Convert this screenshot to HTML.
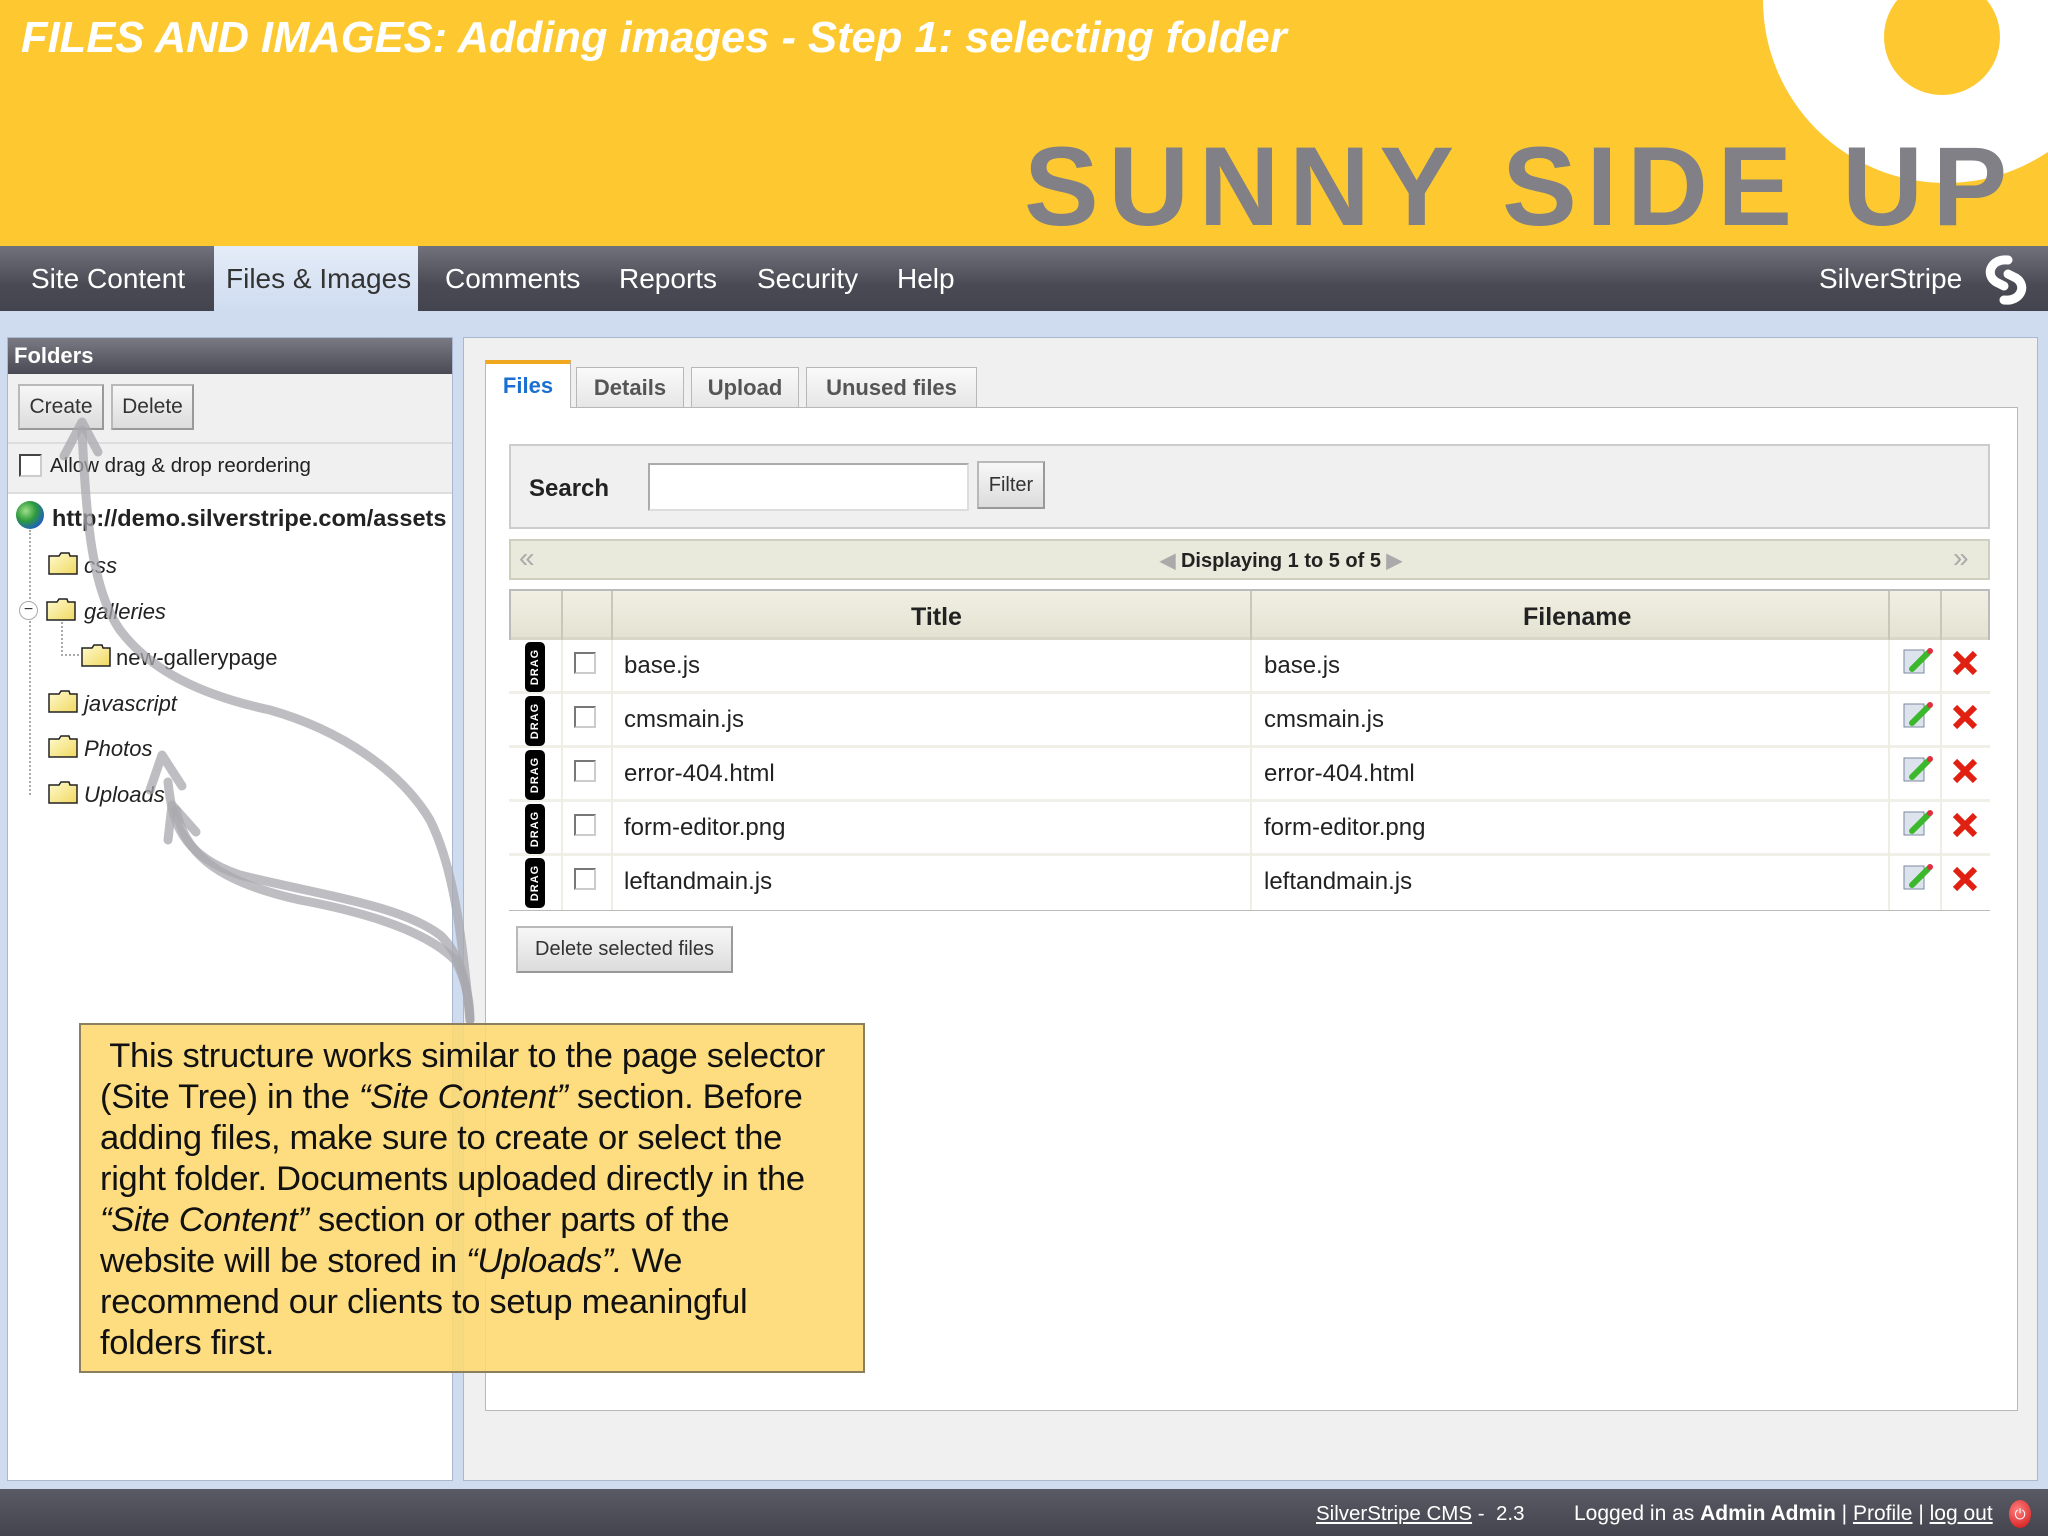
<!DOCTYPE html>
<html><head><meta charset="utf-8">
<style>
*{margin:0;padding:0;box-sizing:border-box}
body{width:2048px;height:1536px;position:relative;overflow:hidden;font-family:"Liberation Sans",Arial,sans-serif;background:#cfdcf0}
.a{position:absolute}
#hdr{left:0;top:0;width:2048px;height:246px;background:#fdc830;overflow:hidden}
#nav{left:0;top:246px;width:2048px;height:65px;background:linear-gradient(#72727c,#4a4a54 60%,#44444e)}
.ni{position:absolute;top:0;height:65px;line-height:65px;color:#fff;font-size:28px}
.btn{position:absolute;background:linear-gradient(#f7f7f7,#dcdcdc);border:2px solid #b9b9b9;border-right-color:#999;border-bottom-color:#999;font-size:21px;color:#333;text-align:center}
.tab{position:absolute;top:367px;height:40px;background:linear-gradient(#fafafa,#e6e6e6);border:1px solid #b8b8b8;border-bottom:none;font-size:22px;font-weight:bold;color:#555;text-align:center;line-height:40px}
.fold{position:absolute;width:30px;height:23px}
.ti{position:absolute;font-size:22px;font-style:italic;color:#222}
.row{position:absolute;left:509px;width:1481px;height:54px;background:#fff;border-bottom:3px solid #f1f0e8}
.drag{position:absolute;left:16px;top:2px;width:20px;height:50px;background:#000;border-radius:5px;color:#fff;font-size:11px;font-weight:bold}
.drag span{position:absolute;left:50%;top:50%;transform:translate(-50%,-50%) rotate(-90deg);letter-spacing:1px}
.cb{position:absolute;left:65px;top:12px;width:22px;height:22px;border:2px solid #777;border-right-color:#ccc;border-bottom-color:#ccc;background:#fff}
.cell{position:absolute;top:12px;font-size:24px;color:#222}
.vl{position:absolute;top:0;width:2px;height:54px;background:#efeee4}
</style></head><body>
<div id="hdr" class="a">
 <div class="a" style="left:1763px;top:-183px;width:366px;height:366px;border-radius:50%;background:#fff"></div>
 <div class="a" style="left:1884px;top:-21px;width:116px;height:116px;border-radius:50%;background:#fdc830"></div>
 <div class="a" style="left:21px;top:14px;font-size:43.5px;font-style:italic;font-weight:bold;color:#fff;white-space:nowrap">FILES AND IMAGES: Adding images - Step 1: selecting folder</div>
 <div class="a" style="left:1024px;top:131px;font-size:112px;line-height:112px;font-weight:bold;color:#808086;white-space:nowrap;letter-spacing:9.5px">SUNNY SIDE UP</div>
</div>
<div id="nav" class="a">
 <div class="ni" style="left:31px">Site Content</div>
 <div class="a" style="left:214px;top:0;width:204px;height:65px;background:linear-gradient(#e4ecf8,#cfdcf0)"></div>
 <div class="ni" style="left:226px;color:#333">Files &amp; Images</div>
 <div class="ni" style="left:445px">Comments</div>
 <div class="ni" style="left:619px">Reports</div>
 <div class="ni" style="left:757px">Security</div>
 <div class="ni" style="left:897px">Help</div>
 <div class="ni" style="left:1819px">SilverStripe</div>
 <svg class="a" style="left:1978px;top:8px" width="56" height="52" viewBox="0 0 56 52"><path d="M30 6 C14 4 6 20 18 28 L26 32" stroke="#fff" stroke-width="9" fill="none" stroke-linecap="round"/><path d="M26 46 C42 48 50 32 38 24 L30 20" stroke="#fff" stroke-width="9" fill="none" stroke-linecap="round"/></svg>
</div>
<div class="a" style="left:7px;top:337px;width:446px;height:1144px;background:#fff;border:1px solid #a9b8cf"></div>
<div class="a" style="left:8px;top:338px;width:444px;height:36px;background:linear-gradient(#7a7a84,#4a4a54);color:#fff;font-weight:bold;font-size:22px;line-height:36px;padding-left:6px">Folders</div>
<div class="a" style="left:8px;top:374px;width:444px;height:120px;background:#f0f0f0;border-bottom:2px solid #ddd"></div>
<div class="a" style="left:8px;top:442px;width:444px;height:2px;background:#ddd"></div>
<div class="btn" style="left:18px;top:384px;width:86px;height:46px;line-height:42px">Create</div>
<div class="btn" style="left:111px;top:384px;width:83px;height:46px;line-height:42px">Delete</div>
<div class="a" style="left:19px;top:454px;width:23px;height:23px;border:2px solid #444;border-right-color:#ccc;border-bottom-color:#ccc;background:#fff"></div>
<div class="a" style="left:50px;top:454px;font-size:20.5px;color:#222">Allow drag &amp; drop reordering</div>
<div class="a" style="left:16px;top:501px;width:28px;height:28px;border-radius:50%;background:radial-gradient(circle at 35% 35%,#9fe08a,#2e9a3c 40%,#1f5fc0 75%)"></div>
<div class="a" style="left:52px;top:505px;font-size:23.5px;font-weight:bold;color:#222">http://demo.silverstripe.com/assets</div>
<div class="a" style="left:29px;top:530px;width:0;height:265px;border-left:2px dotted #aaa"></div>
<div class="a" style="left:19px;top:601px;width:19px;height:19px;border-radius:50%;border:1px solid #aaa;background:#fff;font-size:16px;line-height:15px;text-align:center;color:#333">−</div>
<svg width="0" height="0" style="position:absolute"><defs><linearGradient id="fg" x1="0" y1="0" x2="1" y2="1"><stop offset="0" stop-color="#fffbd0"/><stop offset="1" stop-color="#f0d860"/></linearGradient></defs></svg>
<svg class="fold" style="left:48px;top:552px" viewBox="0 0 30 23"><path d="M1 4h10l2 -3h8l1 3h7v18H1z" fill="url(#fg)" stroke="#222" stroke-width="1.5"/></svg>
<div class="ti" style="left:84px;top:553px">css</div>
<svg class="fold" style="left:46px;top:598px" viewBox="0 0 30 23"><path d="M1 4h10l2 -3h8l1 3h7v18H1z" fill="url(#fg)" stroke="#222" stroke-width="1.5"/></svg>
<div class="ti" style="left:84px;top:599px">galleries</div>
<div class="a" style="left:61px;top:622px;width:18px;height:34px;border-left:2px dotted #aaa;border-bottom:2px dotted #aaa"></div>
<svg class="fold" style="left:81px;top:644px" viewBox="0 0 30 23"><path d="M1 4h10l2 -3h8l1 3h7v18H1z" fill="url(#fg)" stroke="#222" stroke-width="1.5"/></svg>
<div class="ti" style="left:116px;top:645px;font-style:normal">new-gallerypage</div>
<svg class="fold" style="left:48px;top:690px" viewBox="0 0 30 23"><path d="M1 4h10l2 -3h8l1 3h7v18H1z" fill="url(#fg)" stroke="#222" stroke-width="1.5"/></svg>
<div class="ti" style="left:84px;top:691px">javascript</div>
<svg class="fold" style="left:48px;top:735px" viewBox="0 0 30 23"><path d="M1 4h10l2 -3h8l1 3h7v18H1z" fill="url(#fg)" stroke="#222" stroke-width="1.5"/></svg>
<div class="ti" style="left:84px;top:736px">Photos</div>
<svg class="fold" style="left:48px;top:781px" viewBox="0 0 30 23"><path d="M1 4h10l2 -3h8l1 3h7v18H1z" fill="url(#fg)" stroke="#222" stroke-width="1.5"/></svg>
<div class="ti" style="left:84px;top:782px">Uploads</div>
<div class="a" style="left:463px;top:337px;width:1575px;height:1144px;background:#f0f0f0;border:1px solid #a9b8cf"></div>
<div class="a" style="left:485px;top:407px;width:1533px;height:1004px;background:#fff;border:1px solid #b8b8b8"></div>
<div class="tab" style="left:485px;top:360px;width:86px;height:48px;background:#fff;color:#1a6fd0;border-top:4px solid #f0a820;line-height:44px">Files</div>
<div class="tab" style="left:576px;width:108px">Details</div>
<div class="tab" style="left:691px;width:108px">Upload</div>
<div class="tab" style="left:806px;width:171px">Unused files</div>
<div class="a" style="left:509px;top:444px;width:1481px;height:85px;background:#f0f0f0;border:2px solid #ccc"></div>
<div class="a" style="left:529px;top:475px;font-size:24px;font-weight:bold;color:#222">Search</div>
<div class="a" style="left:648px;top:463px;width:321px;height:48px;background:#fff;border:2px solid #aaa;border-right-color:#ddd;border-bottom-color:#ddd"></div>
<div class="btn" style="left:977px;top:461px;width:68px;height:48px;line-height:44px;font-size:20px">Filter</div>
<div class="a" style="left:509px;top:539px;width:1481px;height:41px;background:#eaeadc;border:2px solid #cfcfc0"></div>
<div class="a" style="left:519px;top:542px;font-size:28px;color:#aaa">«</div>
<div class="a" style="left:1953px;top:542px;font-size:28px;color:#aaa">»</div>
<div class="a" style="left:1160px;top:548px;font-size:20px;font-weight:bold;color:#222;white-space:nowrap"><span style="color:#aaa">◀</span> Displaying 1 to 5 of 5 <span style="color:#aaa">▶</span></div>
<div class="a" style="left:509px;top:589px;width:1481px;height:322px;border:2px solid #bbb;background:#f4f3ea"></div>
<div class="a" style="left:511px;top:591px;width:1477px;height:49px;background:linear-gradient(#f0efe2,#e4e3d2);border-bottom:3px solid #d8d7c8"></div>
<div class="a" style="left:561px;top:591px;width:2px;height:49px;background:#c8c7b8"></div>
<div class="a" style="left:611px;top:591px;width:2px;height:49px;background:#c8c7b8"></div>
<div class="a" style="left:1250px;top:591px;width:2px;height:49px;background:#c8c7b8"></div>
<div class="a" style="left:1888px;top:591px;width:2px;height:49px;background:#c8c7b8"></div>
<div class="a" style="left:1940px;top:591px;width:2px;height:49px;background:#c8c7b8"></div>
<div class="a" style="left:911px;top:603px;font-size:25px;font-weight:bold;color:#222">Title</div>
<div class="a" style="left:1523px;top:603px;font-size:25px;font-weight:bold;color:#222">Filename</div>
<div class="row" style="top:640px"><div class="drag"><span>DRAG</span></div><div class="cb"></div><div class="vl" style="left:52px"></div><div class="vl" style="left:102px"></div><div class="vl" style="left:741px"></div><div class="vl" style="left:1379px"></div><div class="vl" style="left:1431px"></div><div class="cell" style="left:115px">base.js</div><div class="cell" style="left:755px">base.js</div>
<svg class="a" style="left:1393px;top:7px" width="34" height="28" viewBox="0 0 34 28"><rect x="2" y="3" width="20" height="23" fill="#dde3ec" stroke="#7a8aa0"/><path d="M10 22 L26 6" stroke="#3cb82c" stroke-width="6" stroke-linecap="round"/><circle cx="28" cy="4" r="3" fill="#e03040"/></svg>
<svg class="a" style="left:1443px;top:10px" width="26" height="26" viewBox="0 0 26 26"><path d="M3 3L23 23M23 3L3 23" stroke="#e02010" stroke-width="6"/></svg></div>
<div class="row" style="top:694px"><div class="drag"><span>DRAG</span></div><div class="cb"></div><div class="vl" style="left:52px"></div><div class="vl" style="left:102px"></div><div class="vl" style="left:741px"></div><div class="vl" style="left:1379px"></div><div class="vl" style="left:1431px"></div><div class="cell" style="left:115px">cmsmain.js</div><div class="cell" style="left:755px">cmsmain.js</div>
<svg class="a" style="left:1393px;top:7px" width="34" height="28" viewBox="0 0 34 28"><rect x="2" y="3" width="20" height="23" fill="#dde3ec" stroke="#7a8aa0"/><path d="M10 22 L26 6" stroke="#3cb82c" stroke-width="6" stroke-linecap="round"/><circle cx="28" cy="4" r="3" fill="#e03040"/></svg>
<svg class="a" style="left:1443px;top:10px" width="26" height="26" viewBox="0 0 26 26"><path d="M3 3L23 23M23 3L3 23" stroke="#e02010" stroke-width="6"/></svg></div>
<div class="row" style="top:748px"><div class="drag"><span>DRAG</span></div><div class="cb"></div><div class="vl" style="left:52px"></div><div class="vl" style="left:102px"></div><div class="vl" style="left:741px"></div><div class="vl" style="left:1379px"></div><div class="vl" style="left:1431px"></div><div class="cell" style="left:115px">error-404.html</div><div class="cell" style="left:755px">error-404.html</div>
<svg class="a" style="left:1393px;top:7px" width="34" height="28" viewBox="0 0 34 28"><rect x="2" y="3" width="20" height="23" fill="#dde3ec" stroke="#7a8aa0"/><path d="M10 22 L26 6" stroke="#3cb82c" stroke-width="6" stroke-linecap="round"/><circle cx="28" cy="4" r="3" fill="#e03040"/></svg>
<svg class="a" style="left:1443px;top:10px" width="26" height="26" viewBox="0 0 26 26"><path d="M3 3L23 23M23 3L3 23" stroke="#e02010" stroke-width="6"/></svg></div>
<div class="row" style="top:802px"><div class="drag"><span>DRAG</span></div><div class="cb"></div><div class="vl" style="left:52px"></div><div class="vl" style="left:102px"></div><div class="vl" style="left:741px"></div><div class="vl" style="left:1379px"></div><div class="vl" style="left:1431px"></div><div class="cell" style="left:115px">form-editor.png</div><div class="cell" style="left:755px">form-editor.png</div>
<svg class="a" style="left:1393px;top:7px" width="34" height="28" viewBox="0 0 34 28"><rect x="2" y="3" width="20" height="23" fill="#dde3ec" stroke="#7a8aa0"/><path d="M10 22 L26 6" stroke="#3cb82c" stroke-width="6" stroke-linecap="round"/><circle cx="28" cy="4" r="3" fill="#e03040"/></svg>
<svg class="a" style="left:1443px;top:10px" width="26" height="26" viewBox="0 0 26 26"><path d="M3 3L23 23M23 3L3 23" stroke="#e02010" stroke-width="6"/></svg></div>
<div class="row" style="top:856px;border-bottom:none"><div class="drag"><span>DRAG</span></div><div class="cb"></div><div class="vl" style="left:52px"></div><div class="vl" style="left:102px"></div><div class="vl" style="left:741px"></div><div class="vl" style="left:1379px"></div><div class="vl" style="left:1431px"></div><div class="cell" style="left:115px">leftandmain.js</div><div class="cell" style="left:755px">leftandmain.js</div>
<svg class="a" style="left:1393px;top:7px" width="34" height="28" viewBox="0 0 34 28"><rect x="2" y="3" width="20" height="23" fill="#dde3ec" stroke="#7a8aa0"/><path d="M10 22 L26 6" stroke="#3cb82c" stroke-width="6" stroke-linecap="round"/><circle cx="28" cy="4" r="3" fill="#e03040"/></svg>
<svg class="a" style="left:1443px;top:10px" width="26" height="26" viewBox="0 0 26 26"><path d="M3 3L23 23M23 3L3 23" stroke="#e02010" stroke-width="6"/></svg></div>
<div class="btn" style="left:516px;top:926px;width:217px;height:47px;line-height:43px;font-size:20px">Delete selected files</div>
<svg class="a" style="left:0;top:0" width="2048" height="1536" viewBox="0 0 2048 1536">
<g fill="none" stroke="#a8a8ae" stroke-opacity="0.75" stroke-width="9" stroke-linecap="round" stroke-linejoin="round">
<path d="M82 430 C86 520 92 590 120 630 C150 670 200 695 270 710 C340 730 400 770 430 820 C455 870 462 940 470 1020"/>
<path d="M64 456 L82 422 L98 452"/>
<path d="M168 782 C172 820 180 855 240 875 C320 895 400 905 440 935 C462 955 468 990 470 1020"/>
<path d="M150 790 L162 755 L182 786"/>
<path d="M176 810 C185 850 210 880 300 900 C380 915 430 935 455 960 C466 980 470 1000 470 1020"/>
<path d="M168 840 L172 805 L196 832"/>
</g></svg>
<div class="a" style="left:79px;top:1023px;width:786px;height:350px;background:rgba(253,216,110,0.88);border:2px solid #8a8060"></div>
<div class="a" style="left:100px;top:1036px;font-size:34.5px;line-height:41px;color:#111;white-space:nowrap;letter-spacing:-0.3px">&nbsp;This structure works similar to the page selector<br>(Site Tree) in the <i>“Site Content”</i> section. Before<br>adding files, make sure to create or select the<br>right folder. Documents uploaded directly in the<br><i>“Site Content”</i> section or other parts of the<br>website will be stored in <i>“Uploads”.</i> We<br>recommend our clients to setup meaningful<br>folders first.</div>
<div class="a" style="left:0;top:1489px;width:2048px;height:47px;background:linear-gradient(#5a5a64,#44444e)"></div>
<div class="a" style="left:1316px;top:1502px;font-size:20.5px;color:#fff;white-space:nowrap"><u>SilverStripe CMS</u> - &nbsp;2.3</div>
<div class="a" style="left:1574px;top:1502px;font-size:21px;color:#fff;white-space:nowrap">Logged in as <b>Admin Admin</b> | <u>Profile</u> | <u>log out</u></div>
<div class="a" style="left:2009px;top:1500px;width:22px;height:28px;border-radius:50%;background:radial-gradient(circle at 40% 35%,#ff8080,#d01010);color:#fff;font-size:14px;text-align:center;line-height:28px">⏻</div>
</body></html>
